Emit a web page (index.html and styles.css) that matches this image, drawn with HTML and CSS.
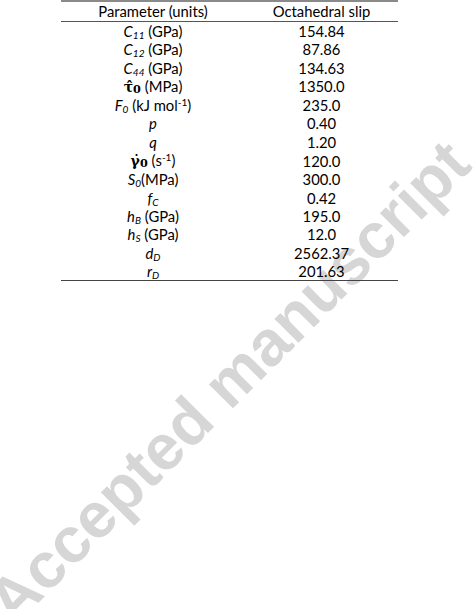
FILE: index.html
```html
<!DOCTYPE html>
<html>
<head>
<meta charset="utf-8">
<link rel="stylesheet" href="styles.css">
</head>
<body>
<div class="page">
  <div class="watermark">Accepted manuscript</div>
  <table class="params">
    <thead>
      <tr><th>Parameter (units)</th><th>Octahedral slip</th></tr>
    </thead>
    <tbody>
      <tr><td><i>C<sub>11</sub></i> (GPa)</td><td>154.84</td></tr>
      <tr><td><i>C<sub>12</sub></i> (GPa)</td><td>87.86</td></tr>
      <tr><td><i>C<sub>44</sub></i> (GPa)</td><td>134.63</td></tr>
      <tr><td><b class="math">τ̂<sub>0</sub></b> (MPa)</td><td>1350.0</td></tr>
      <tr><td><i>F<sub>0</sub></i> (kJ mol<sup>-1</sup>)</td><td>235.0</td></tr>
      <tr><td><i>p</i></td><td>0.40</td></tr>
      <tr><td><i>q</i></td><td>1.20</td></tr>
      <tr><td><b class="math">γ̇<sub>0</sub></b> (s<sup>-1</sup>)</td><td>120.0</td></tr>
      <tr><td><i>S<sub>0</sub></i>(MPa)</td><td>300.0</td></tr>
      <tr><td><i>f<sub>C</sub></i></td><td>0.42</td></tr>
      <tr><td><i>h<sub>B</sub></i> (GPa)</td><td>195.0</td></tr>
      <tr><td><i>h<sub>S</sub></i> (GPa)</td><td>12.0</td></tr>
      <tr><td><i>d<sub>D</sub></i></td><td>2562.37</td></tr>
      <tr><td><i>r<sub>D</sub></i></td><td>201.63</td></tr>
    </tbody>
  </table>
</div>
</body>
</html>
```

FILE: styles.css
```css
html, body {
  margin: 0;
  padding: 0;
  background: #ffffff;
}
.page {
  position: relative;
  width: 474px;
  height: 609px;
  overflow: hidden;
  font-family: Lato, "Open Sans", sans-serif;
  font-size: 14.8px;
  color: #000;
}
.params {
  position: relative;
  z-index: 1;
  margin-left: 61px;
  width: 337px;
  border-collapse: collapse;
  border-spacing: 0;
}
.params th, .params td {
  padding: 0;
  text-align: center;
  font-weight: normal;
  white-space: nowrap;
}
.params th:first-child, .params td:first-child {
  width: 184px;
}
.params thead tr {
  border-top: 2px solid #8a8a8a;
  border-bottom: 1.5px solid #555;
}
.params th {
  height: 19px;
  line-height: 19px;
}
.params td {
  height: 18.3px;
  line-height: 18.3px;
}
.params tbody tr:last-child {
  border-bottom: 1.5px solid #444;
}
.params sub, .params sup {
  font-size: 0.68em;
  line-height: 0;
}
.params sub {
  vertical-align: -0.2em;
}
.params sup {
  vertical-align: 0.5em;
}
.math {
  font-family: "DejaVu Serif", serif;
  font-weight: bold;
  font-size: 0.95em;
}
.math sub {
  font-size: 0.8em;
  vertical-align: -0.1em;
}
.watermark {
  position: absolute;
  z-index: 0;
  left: 228px;
  top: 382px;
  transform: translate(-50%, -50%) rotate(-45deg);
  font-family: "Liberation Sans", Arial, sans-serif;
  font-weight: bold;
  font-size: 64px;
  color: #d6d6d6;
  white-space: nowrap;
  pointer-events: none;
}
```
